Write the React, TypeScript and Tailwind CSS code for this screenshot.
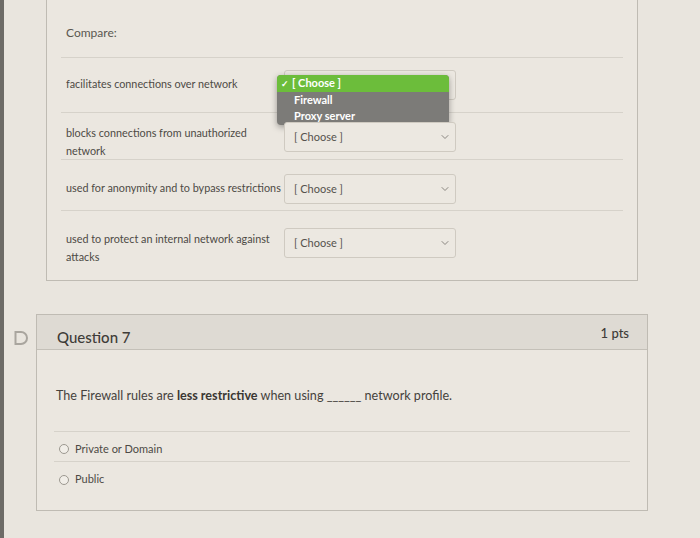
import { ChevronDown } from "lucide-react";

const font = { fontFamily: "Lato, 'Open Sans', sans-serif" };

function Select({ label = "[ Choose ]" }: { label?: string }) {
  return (
    <div className="flex h-[30px] w-[172px] items-center justify-between rounded-[3px] border border-[#cfcac1] bg-[#ece8e1] pl-[9px] pr-[4px] text-[11px] text-[#55524d]">
      <span>{label}</span>
      <ChevronDown className="h-3 w-3 text-[#8a8680]" strokeWidth={2} />
    </div>
  );
}

function Row({
  text,
  pt,
  h,
  tp = "pt-[5px]",
  line = true,
  label,
  children,
}: {
  text: React.ReactNode;
  pt: string;
  h: string;
  tp?: string;
  line?: boolean;
  label?: string;
  children?: React.ReactNode;
}) {
  return (
    <div className={`relative flex ${pt} ${h} ${line ? "border-b border-[#d6d2ca]" : ""}`}>
      <div className={`w-[223px] pl-[5px] ${tp} text-[10.8px] leading-[18px] text-[#4d4a45]`}>{text}</div>
      <Select label={label} />
      {children}
    </div>
  );
}

export default function App() {
  return (
    <div className="relative h-[538px] w-[700px] overflow-hidden border-l-4 border-[#6d6b67] bg-[#e9e5de]" style={font}>
      {/* top card */}
      <div className="ml-[42px] h-[281px] w-[592px] border-x border-b border-[#bfbbb3] bg-[#ebe7e0] px-[14px] pt-[24px]">
        <div className="h-[34px] border-b border-[#d6d2ca] pl-[5px] text-[12px] text-[#5a5750]">Compare:</div>

        <Row text="facilitates connections over network" pt="pt-[12px]" h="h-[55px]" label="">
          <div className="absolute left-[216px] top-[17px] w-[172px] overflow-hidden rounded-[4px] bg-[#7c7b78] text-[11px] font-bold text-white shadow-[0_2px_6px_rgba(0,0,0,0.35)]">
            <div className="flex h-[17px] items-center gap-[3px] bg-[#6cbd3b] pl-[4px]">
              <span className="text-[9px]">✓</span>
              <span>[ Choose ]</span>
            </div>
            <div className="flex h-[17px] items-center pl-[17px]">Firewall</div>
            <div className="flex h-[16px] items-center pb-[1px] pl-[17px]">Proxy server</div>
          </div>
        </Row>

        <Row text={<>blocks connections from unauthorized<br />network</>} pt="pt-[9px]" h="h-[47px]" tp="pt-[2px]" />
        <Row text="used for anonymity and to bypass restrictions" pt="pt-[14px]" h="h-[51px]" />
        <Row
          text={<>used to protect an internal network against<br />attacks</>}
          pt="pt-[17px]"
          h="h-[50px]"
          tp="pt-[2px] leading-[17px]"
          line={false}
        />
      </div>

      {/* question 7 */}
      <div className="relative mt-[33px] ml-[32px] w-[612px]">
        <svg className="absolute left-[-23px] top-[16px]" width="16" height="16" viewBox="0 0 16 16">
          <path d="M2.5 2 H8 A6 6 0 0 1 8 14 H2.5 Z" fill="none" stroke="#a9a59e" strokeWidth="2" />
        </svg>
        <div className="border border-[#bfbbb3]">
          <div className="flex h-[35px] items-start justify-between border-b border-[#c4c0b8] bg-[#dedad3] pl-[20px] pr-[18px]">
            <span className="pt-[14px] text-[15px] font-medium leading-[16px] text-[#3f3c38]">Question 7</span>
            <span className="pt-[9px] text-[13px] font-medium text-[#3f3c38]">1 pts</span>
          </div>
          <div className="h-[160px] bg-[#ebe7e0] px-[17px] pt-[38px]">
            <p className="pl-[2px] text-[12.6px] leading-[16px] text-[#45423d]">
              The Firewall rules are <b className="font-bold text-[#3a3733]">less restrictive</b> when using ______ network profile.
            </p>
            <div className="mt-[27px] border-t border-[#d6d2ca]" />
            <div className="flex h-[30px] items-center gap-[6px] border-b border-[#d6d2ca] pl-[5px] pt-[5px] text-[11px] text-[#4d4a45]">
              <span className="h-[10px] w-[10px] rounded-full border border-[#9c9890] bg-[#f1eee8]" />
              Private or Domain
            </div>
            <div className="flex h-[35px] items-center gap-[6px] pl-[5px] text-[11px] text-[#4d4a45]">
              <span className="h-[10px] w-[10px] rounded-full border border-[#9c9890] bg-[#f1eee8]" />
              Public
            </div>
          </div>
        </div>
      </div>
    </div>
  );
}
